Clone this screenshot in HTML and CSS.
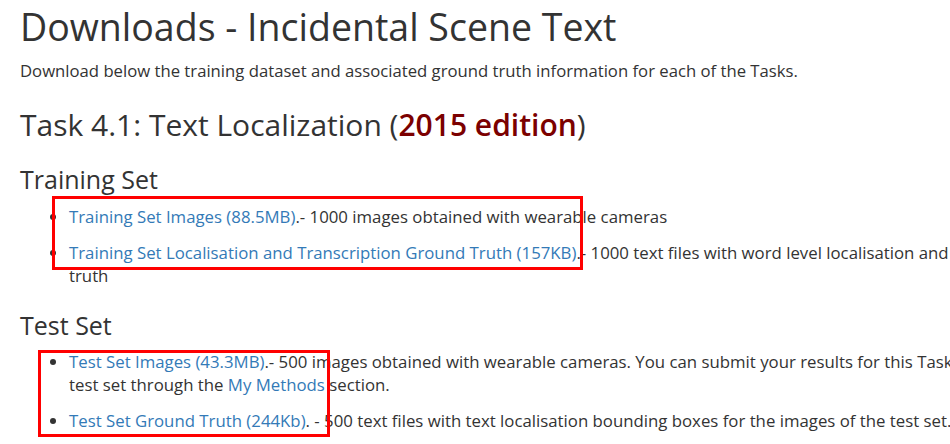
FILE: index.html
```html
<!DOCTYPE html>
<html lang="en">
<head>
    <meta charset="UTF-8">
    <title>Downloads - Incidental Scene Text</title>
    <link rel="stylesheet" href="styles.css">
</head>
<body>
    <div class="container">
        <h1>Downloads - Incidental Scene Text</h1>
        <p class="intro">Download below the training dataset and associated ground truth information for each of the Tasks.</p>

        <h2>Task 4.1: Text Localization (<span class="edition">2015 edition</span>)</h2>

        <!-- Training Set -->
        <h3>Training Set</h3>
        <ul class="files">
            <li><a href="#">Training Set Images (88.5MB)</a>.- 1000 images obtained with wearable cameras</li>
            <li><a href="#">Training Set Localisation and Transcription Ground Truth (157KB)</a>.- 1000 text files with word level localisation and transcription ground truth</li>
        </ul>

        <!-- Test Set -->
        <h3>Test Set</h3>
        <ul class="files">
            <li><a href="#">Test Set Images (43.3MB)</a>.- 500 images obtained with wearable cameras. You can submit your results for this Task at any time and over the test set through the <a href="#">My Methods</a> section.</li>
            <li><a href="#">Test Set Ground Truth (244Kb)</a>. - 500 text files with text localisation bounding boxes for the images of the test set.</li>
        </ul>
    </div>

    <!-- annotation boxes -->
    <div class="mark mark-training"></div>
    <div class="mark mark-test"></div>
</body>
</html>
```

FILE: styles.css
```css
body {
    font-family: 'Open Sans', 'DejaVu Sans', sans-serif;
    background-color: #ffffff;
    color: #333;
    margin: 0;
    padding: 0;
    overflow: hidden;
}

.container {
    width: 1130px;
    padding: 0 20px;
}

h1 {
    font-size: 37.5px;
    font-weight: 400;
    line-height: 1.1;
    margin: 6px 0 12px;
}

.intro {
    font-size: 16.7px;
    line-height: 23px;
    margin: 0 0 26px;
}

h2 {
    font-size: 30px;
    font-weight: 400;
    line-height: 1.1;
    margin: 0 0 25px;
}

.edition {
    color: #7b0000;
    font-weight: 600;
}

h3 {
    font-size: 25px;
    font-weight: 400;
    line-height: 1.1;
    margin: 0 0 11px;
}

.files {
    font-size: 16.8px;
    line-height: 23px;
    margin: 0 0 25px;
    padding-left: 49px;
}

.files li {
    margin-bottom: 13px;
}

a {
    color: #337ab7;
    text-decoration: none;
}

.mark {
    position: absolute;
    border: 3px solid #ff0000;
}

.mark-training {
    left: 52px;
    top: 196px;
    width: 525px;
    height: 68px;
}

.mark-test {
    left: 38px;
    top: 350px;
    width: 286px;
    height: 81px;
}
```
